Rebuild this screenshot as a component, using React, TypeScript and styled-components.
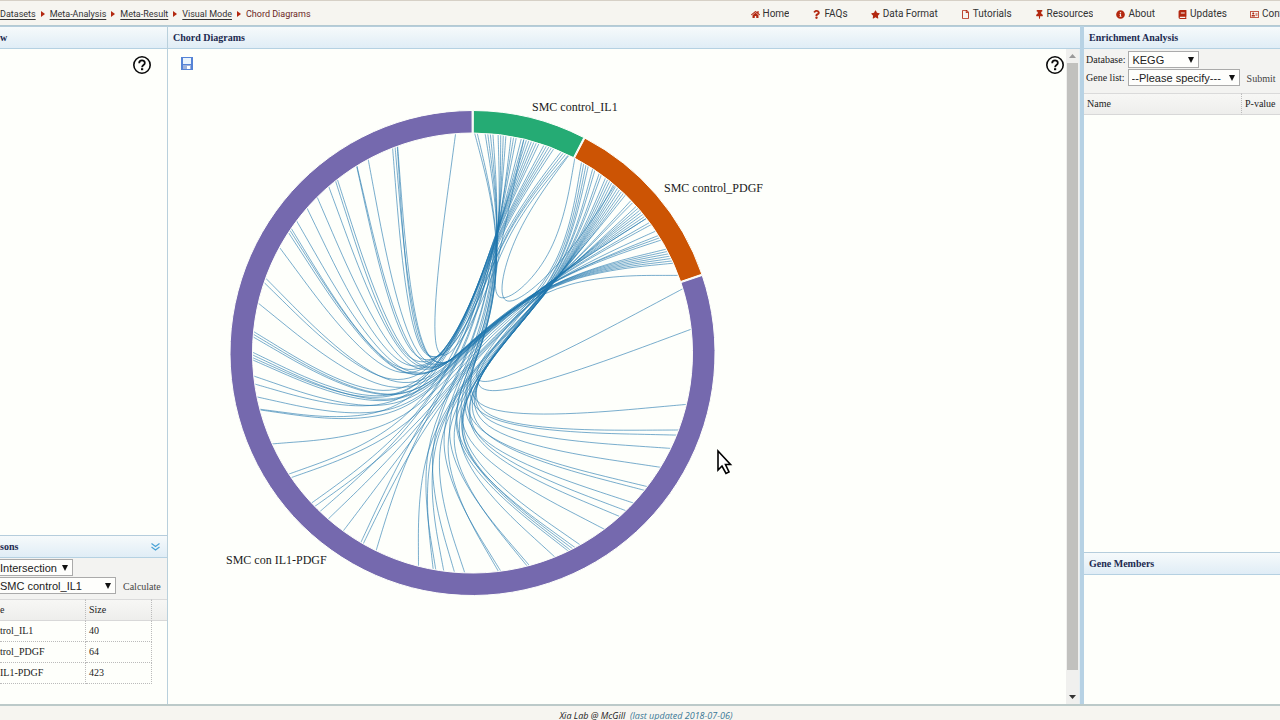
import React from "react";
import styled, { createGlobalStyle } from "styled-components";
import { FaBook, FaHome, FaInfoCircle, FaQuestion, FaRegAddressCard, FaRegFile, FaStar, FaThumbtack } from "react-icons/fa";

const GlobalStyle = createGlobalStyle`
  * { box-sizing: border-box; }
  body { margin: 0; background: #f6f5f0; color: #222; overflow: hidden; font: 10px/14px "Liberation Serif", serif; }
`;

const Page = styled.div`
  display: flex;
  flex-direction: column;
  min-height: 100vh;
`;

const TopBar = styled.header`
  display: flex;
  align-items: center;
  height: 26px;
  padding-top: 2px;
  border-top: 1px solid #d6d0c6;
  border-bottom: 1px solid #b4cad2;
  font-family: Roboto, sans-serif;
  font-size: 9px;
  overflow: hidden;
`;

const Crumbs = styled.nav`
  display: flex;
  align-items: center;
  gap: 5px;
  white-space: nowrap;
`;

const Crumb = styled.a`
  color: #333;
  text-underline-offset: 2px;
`;

const Current = styled.span`
  color: #6b1f1f;
`;

const Menu = styled.nav`
  display: flex;
  gap: 23px;
  margin-left: auto;
`;

const MenuLink = styled.a<{ $clip?: boolean }>`
  display: flex;
  align-items: center;
  gap: 3px;
  width: ${(p) => (p.$clip ? "30px" : "auto")};
  color: #333;
  font-size: 10px;
  white-space: nowrap;
  text-decoration: none;
  overflow: hidden;
  svg { flex: none; width: auto; height: 9px; color: #b32810; }
`;

const Workspace = styled.main`
  flex: 1;
  display: grid;
  grid-template-columns: 168px minmax(0, 1fr) 200px;
  border-bottom: 2px solid #bccac9;
  background: #fefffb;
`;

const Panel = styled.section<{ $side?: "left" | "right" }>`
  display: flex;
  flex-direction: column;
  min-width: 0;
  border-right: ${(p) => (p.$side === "left" ? "1px solid #b9d0dc" : "0")};
  border-left: ${(p) => (p.$side === "right" ? "4px solid #b7d2e4" : "0")};
  overflow: hidden;
`;

const PanelHeader = styled.h2<{ $flush?: boolean }>`
  display: flex;
  align-items: center;
  justify-content: space-between;
  height: 23px;
  margin: 0;
  padding: 0 7px 0 ${(p) => (p.$flush ? "0" : "5px")};
  border-top: 1px solid #b5cddc;
  border-bottom: 1px solid #b5d1e2;
  background: linear-gradient(#f6fafb, #e0edf6);
  color: #1c2a50;
  font-size: 10px;
  line-height: 14px;
`;

const Tools = styled.div<{ $wide?: boolean }>`
  display: flex;
  align-items: flex-start;
  justify-content: space-between;
  padding: 6px ${(p) => (p.$wide ? "1px" : "15px")} 0 13px;
`;

const IconButton = styled.button<{ $end?: boolean }>`
  display: flex;
  margin-left: ${(p) => (p.$end ? "auto" : "0")};
  padding: 0;
  border: 0;
  background: none;
`;

const Filters = styled.form<{ $height: number; $top: number }>`
  display: flex;
  flex-direction: column;
  gap: 1px;
  height: ${(p) => p.$height}px;
  padding-top: ${(p) => p.$top}px;
  background: #f3f3f1;
`;

const Field = styled.div<{ $indent?: boolean }>`
  display: flex;
  align-items: center;
  gap: 3px;
  height: 17px;
  padding-left: ${(p) => (p.$indent ? "2px" : "0")};
  white-space: nowrap;
`;

const SelectBox = styled.span<{ $width: number; $open?: boolean }>`
  display: grid;
  flex: none;
  align-items: center;
  width: ${(p) => p.$width}px;
  select, svg { grid-area: 1 / 1; }
  svg { justify-self: end; margin-right: 5px; pointer-events: none; }
  select {
    appearance: none;
    width: 100%;
    height: 17px;
    padding: 0 0 0 ${(p) => (p.$open ? "0" : "3px")};
    border: 1px solid #aaa;
    border-left-width: ${(p) => (p.$open ? "0" : "1px")};
    border-radius: 0;
    background: #fefefc;
    color: #222;
    font: 11px/14px "Liberation Sans", sans-serif;
  }
`;

const TextButton = styled.button`
  margin-left: 4px;
  padding: 2px 0 0;
  border: 0;
  background: none;
  color: #444;
  font: 10px/14px "Liberation Serif", serif;
`;

const Grid = styled.table`
  width: 100%;
  table-layout: fixed;
  border-collapse: separate;
  border-spacing: 0;
  line-height: 14px;
`;

const HeadCell = styled.th<{ $width?: number; $flush?: boolean }>`
  width: ${(p) => (p.$width ? `${p.$width}px` : "auto")};
  height: 22px;
  padding: 0 0 0 ${(p) => (p.$flush ? "0" : "3px")};
  border-top: 1px solid #dadada;
  border-bottom: 1px solid #d8d8d8;
  border-right: 1px dotted #bbb;
  background: linear-gradient(#f7f7f5, #eeeeec);
  font-weight: normal;
  text-align: left;
  &:last-child { border-right: 0; }
`;

const Cell = styled.td<{ $flush?: boolean }>`
  height: 21px;
  padding: 0 0 0 ${(p) => (p.$flush ? "0" : "3px")};
  border-right: 1px dotted #bbb;
  border-bottom: 1px dotted #bbb;
  white-space: nowrap;
  &:last-child { border: 0; }
`;

const Spacer = styled.div`
  flex: 1;
`;

const Members = styled.div<{ $height: number }>`
  height: ${(p) => p.$height}px;
`;

const Scroller = styled.div`
  flex: 1;
  display: flex;
`;

const Stage = styled.div`
  flex: 1;
  min-width: 0;
`;

const ChordSvg = styled.svg`
  display: block;
  margin: 5px 0 0 32px;
`;

const ScrollTrack = styled.div`
  display: flex;
  flex-direction: column;
  align-items: center;
  width: 14px;
  padding: 5px 1px 5px 1px;
  border-right: 1px solid #e4eef3;
  background: #f0f0ee;
`;

const ScrollThumb = styled.div`
  flex: 1;
  width: 11px;
  margin: 5px 0 25px;
  background: #c1c1be;
`;

const Footer = styled.footer`
  height: 14px;
  padding-left: 12px;
  font: italic 9px/20px "Open Sans", sans-serif;
  text-align: center;
  white-space: pre;
  span { color: #3a7896; }
`;

const Arrow = () => (
  <svg width="4" height="6" viewBox="0 0 4 6"><path d="M0 0L4 3L0 6Z" fill="#b32810" /></svg>
);

const Caret = () => (
  <svg width="6" height="6" viewBox="0 0 6 6"><path d="M0 0H6L3 6Z" fill="#111" /></svg>
);

const HelpIcon = () => (
  <svg width="20" height="20" viewBox="0 0 20 20" fill="none" stroke="#0b0b0b">
    <circle cx="10" cy="10" r="8.200" strokeWidth="1.600" />
    <path d="M7.200 8.200C7.200 4.500 12.800 4.600 12.800 7.900C12.800 10 10.100 9.900 10.100 12.200" strokeWidth="1.800" />
    <path d="M9 13.200H11.200V15.200H9Z" fill="#0b0b0b" stroke="none" />
  </svg>
);

const SaveIcon = () => (
  <svg width="12" height="15" viewBox="0 -2 12 15">
    <rect width="12" height="13" fill="#5583d6" />
    <rect x="2" y="1" width="8" height="6" fill="#eaf4fd" />
    <rect x="2" y="8" width="8" height="4" fill="#9fb3dc" />
    <rect x="6" y="9" width="3" height="3" fill="#fff" />
  </svg>
);

interface Option { label: string; width: number; id: string; open?: boolean; name?: string }
const Select = ({ label, width, id, open, name }: Option) => (
  <SelectBox $width={width} $open={open}>
    <select id={id} aria-label={name}><option>{label}</option></select>
    <Caret />
  </SelectBox>
);

/* ---- chord diagram ---- */

type Point = [number, number];
const CX = 472.5;
const CY = 353;
const INNER = 220;
const OUTER = 242.5;
const STEP = 360 / 527;
const TENSION = 0.85;

const polar = (deg: number, r: number): Point => {
  const a = (deg * Math.PI) / 180;
  return [CX + r * Math.sin(a), CY - r * Math.cos(a)];
};

const IL1_END = 40 * STEP;
const PDGF_END = 104 * STEP;
const HUBS: Record<string, Point> = {
  il1: polar(IL1_END / 2, INNER / 2),
  pdgf: polar((IL1_END + PDGF_END) / 2, INNER / 2),
  both: polar((PDGF_END + 360) / 2, INNER / 2),
};

/* Positions of the shared genes inside each set; every list is in gene order. */
const il1Slots = [0, 1, 4, 5, 6, 7, 9, 10, 11, 12, 14, 15, 16, 18, 19, 20, 21, 22, 23, 24, 25, 27, 28, 29, 30, 31, 34, 35, 36, 37];
const pdgfSlots = [3, 4, 5, 6, 8, 9, 11, 12, 14, 15, 16, 17, 18, 19, 20, 21, 22, 23, 24, 27, 28, 30, 31, 32, 33, 34, 35, 36, 36, 38, 39, 42, 44, 45, 46, 50, 51, 52, 53, 54, 55, 56, 61];
const bothAngles = [
  73, 83.8, 103.5, 110.5, 111.9, 115.7, 121.3, 127.4, 128.6, 133, 135.8, 138, 143.2, 150.7, 152.2, 152.9, 153.6, 154.2,
  158, 165, 165.6, 172.6, 173.2, 182, 184.7, 187.5, 189.6, 190.3, 194.2, 206, 209.8, 210.5, 216, 221, 223.9, 225.8, 227,
  235.5, 236.6, 245.6, 255, 255.2, 258.5, 261.9, 264, 268.2, 268.8, 269.5, 270.2, 274.2, 274.9, 275.6, 283.1, 288.7, 289.9,
  298.7, 303.2, 303.9, 304.5, 306.9, 311.2, 315.1, 319.2, 321.5, 322.1, 328.2, 328.3, 331.7, 338.7, 339.4, 340, 340.1, 355.6,
];

const bundle = (from: number, fromHub: string, to: number, toHub: string) => {
  const raw: Point[] = [polar(from, INNER), HUBS[fromHub], [CX, CY], HUBS[toHub], polar(to, INNER)];
  const [a, b] = [raw[0], raw[4]];
  const p = raw.map(([x, y], i): Point => [
    TENSION * x + (1 - TENSION) * (a[0] + ((b[0] - a[0]) * i) / 4),
    TENSION * y + (1 - TENSION) * (a[1] + ((b[1] - a[1]) * i) / 4),
  ]);
  const pts = [p[0], p[0], ...p, p[4], p[4]];
  const mix = (u: Point, v: Point, k: number, m: number) =>
    `${((u[0] * k + v[0] * m) / (k + m)).toFixed(1)} ${((u[1] * k + v[1] * m) / (k + m)).toFixed(1)}`;
  let d = `M${p[0][0].toFixed(1)} ${p[0][1].toFixed(1)}`;
  for (let i = 1; i < pts.length - 2; i++) {
    const [u, v, w] = [pts[i], pts[i + 1], pts[i + 2]];
    const end = `${((u[0] + 4 * v[0] + w[0]) / 6).toFixed(1)} ${((u[1] + 4 * v[1] + w[1]) / 6).toFixed(1)}`;
    d += `C${mix(u, v, 2, 1)} ${mix(u, v, 1, 2)} ${end}`;
  }
  return d + `L${p[4][0].toFixed(1)} ${p[4][1].toFixed(1)}`;
};

const share = il1Slots.length / bothAngles.length;
const links = bothAngles.map((deg, i) => {
  const g = Math.floor(i * share);
  if (Math.floor((i + 1) * share) > g) {
    return bundle(deg, "both", (il1Slots[g] + 0.8) * STEP, "il1");
  }
  const o = Math.min(i - g, pdgfSlots.length - 1);
  return bundle(deg, "both", IL1_END + (pdgfSlots[o] + 0.5) * STEP, "pdgf");
});
links.push(bundle(13.5, "il1", IL1_END + 0.4, "pdgf"));
links.push(bundle(26, "il1", IL1_END + 13, "pdgf"));

const ring = (from: number, to: number) => {
  const big = to - from > 180 ? 1 : 0;
  const [a, b, c, d] = [polar(from, OUTER), polar(to, OUTER), polar(to, INNER), polar(from, INNER)];
  return `M${a}A${OUTER} ${OUTER} 0 ${big} 1 ${b}L${c}A${INNER} ${INNER} 0 ${big} 0 ${d}Z`;
};

const ChordDiagram = () => (
  <ChordSvg width="600" height="520" viewBox="200 80 600 520" role="img" aria-label="Chord diagram of shared genes">
    <g fill="none" stroke="#1f77ae" strokeOpacity="0.6">
      {links.map((d, i) => <path key={i} d={d} />)}
    </g>
    <g stroke="#fefffb" strokeWidth="1">
      <path d={ring(0.2, IL1_END)} fill="#25ab74" />
      <path d={ring(IL1_END + 0.3, PDGF_END)} fill="#cc5404" />
      <path d={ring(PDGF_END + 0.3, 359.9)} fill="#7569ae" />
    </g>
    <g fill="#1a1a1a" fontFamily='"Liberation Serif", serif' fontSize="12">
      <text x="532" y="111">SMC control_IL1</text>
      <text x="664" y="192">SMC control_PDGF</text>
      <text x="226" y="564">SMC con IL1-PDGF</text>
    </g>
    <path d="M718 451V470L722 466L726 473.500L729 472L725.500 464.500H730.500Z" fill="#fff" stroke="#000" strokeWidth="1.600" />
  </ChordSvg>
);

const crumbs = ["Datasets", "Meta-Analysis", "Meta-Result", "Visual Mode"];
const menu = [
  { label: "Home", Icon: FaHome },
  { label: "FAQs", Icon: FaQuestion },
  { label: "Data Format", Icon: FaStar },
  { label: "Tutorials", Icon: FaRegFile },
  { label: "Resources", Icon: FaThumbtack },
  { label: "About", Icon: FaInfoCircle },
  { label: "Updates", Icon: FaBook },
  { label: "Contact", Icon: FaRegAddressCard, clip: true },
];
const rows = [["trol_IL1", "40"], ["trol_PDGF", "64"], ["IL1-PDGF", "423"]];

export default function App() {
  return (
    <Page>
      <GlobalStyle />
      <TopBar>
        <Crumbs aria-label="Breadcrumb">
          {crumbs.map((c) => (
            <React.Fragment key={c}><Crumb href="#">{c}</Crumb><Arrow /></React.Fragment>
          ))}
          <Current>Chord Diagrams</Current>
        </Crumbs>
        <Menu>
          {menu.map(({ label, Icon, clip }) => (
            <MenuLink href="#" key={label} $clip={clip}><Icon />{label}</MenuLink>
          ))}
        </Menu>
      </TopBar>
      <Workspace>
        <Panel $side="left">
          <PanelHeader $flush>w</PanelHeader>
          <Tools><IconButton $end aria-label="Help"><HelpIcon /></IconButton></Tools>
          <Spacer />
          <PanelHeader $flush>
            sons
            <svg width="9" height="8" viewBox="0 0 9 8" fill="none" stroke="#4aa3d6" strokeWidth="1.200"><path d="M.5 .5L4.500 3.500L8.500 .5M.5 4L4.500 7L8.500 4" /></svg>
          </PanelHeader>
          <Filters $height={41} $top={1}>
            <Field><Select id="operation" name="Operation" label="Intersection" width={73} open /></Field>
            <Field>
              <Select id="set" name="Set" label="SMC control_IL1" width={116} open />
              <TextButton type="button">Calculate</TextButton>
            </Field>
          </Filters>
          <Grid>
            <thead>
              <tr><HeadCell $flush $width={86}>e</HeadCell><HeadCell $width={66}>Size</HeadCell><HeadCell aria-label="Actions" /></tr>
            </thead>
            <tbody>
              {rows.map(([name, size]) => <tr key={name}><Cell $flush>{name}</Cell><Cell>{size}</Cell><Cell /></tr>)}
            </tbody>
          </Grid>
          <Members $height={20} />
        </Panel>
        <Panel>
          <PanelHeader>Chord Diagrams</PanelHeader>
          <Scroller>
            <Stage>
              <Tools $wide>
                <IconButton aria-label="Save"><SaveIcon /></IconButton>
                <IconButton aria-label="Help"><HelpIcon /></IconButton>
              </Tools>
              <ChordDiagram />
            </Stage>
            <ScrollTrack>
              <svg width="7" height="4" viewBox="0 0 7 4"><path d="M0 4H7L3.500 0Z" fill="#999" /></svg>
              <ScrollThumb />
              <svg width="7" height="4" viewBox="0 0 7 4"><path d="M0 0H7L3.500 4Z" fill="#333" /></svg>
            </ScrollTrack>
          </Scroller>
        </Panel>
        <Panel $side="right">
          <PanelHeader>Enrichment Analysis</PanelHeader>
          <Filters $height={44} $top={2}>
            <Field $indent><label htmlFor="database">Database:</label><Select id="database" label="KEGG" width={71} /></Field>
            <Field $indent>
              <label htmlFor="genes">Gene list:</label><Select id="genes" label="--Please specify---" width={112} />
              <TextButton type="button">Submit</TextButton>
            </Field>
          </Filters>
          <Grid>
            <thead><tr><HeadCell $width={158}>Name</HeadCell><HeadCell>P-value</HeadCell></tr></thead>
          </Grid>
          <Spacer />
          <PanelHeader>Gene Members</PanelHeader>
          <Members $height={129} />
        </Panel>
      </Workspace>
      <Footer>Xia Lab @ McGill  <span>(last updated 2018-07-06)</span></Footer>
    </Page>
  );
}
